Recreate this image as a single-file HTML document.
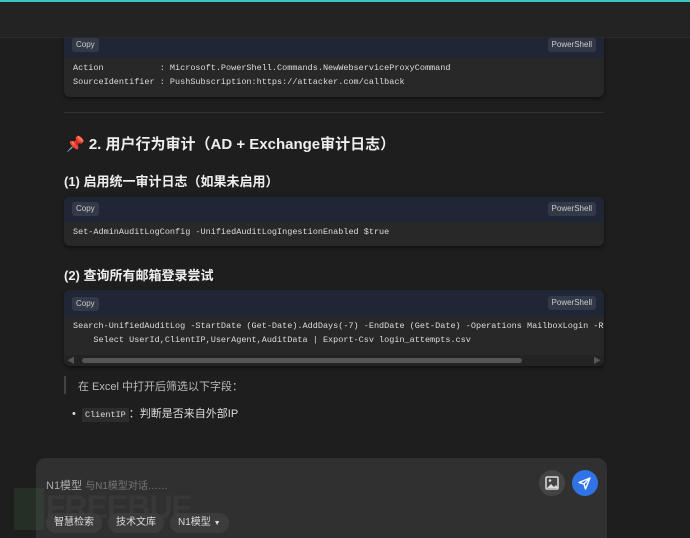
<!DOCTYPE html><html><head><meta charset="utf-8"><style>
html,body{margin:0;width:690px;height:538px;overflow:hidden}
body{background:#1e1e1e;position:relative;font-family:"Liberation Sans","Noto Sans CJK SC",sans-serif;color:#e6e6e6}
.top{position:absolute;left:0;top:0;width:690px;height:38px;background:#232323;border-top:2px solid #3fc2c4;box-sizing:border-box;z-index:5;border-bottom:1px solid #2a2a2a}
.cb{position:absolute;left:64px;width:540px;background:#282828;border-radius:6px;overflow:hidden;box-shadow:0 2px 4px rgba(0,0,0,.5)}
.hd{height:25px;background:#1f2736;position:relative}
.btn{position:absolute;top:5px;height:14px;line-height:14px;font-size:8px;background:#323a48;color:#ccc;border-radius:3px;padding:0 4px}
.code{font-family:"Liberation Mono",monospace;font-size:8.5px;color:#ddd;padding:6px 9px;line-height:14px;white-space:pre}
h2{position:absolute;left:66px;margin:0;font-size:15px;font-weight:bold;color:#eee}
h3{position:absolute;left:64px;margin:0;font-size:13px;font-weight:bold;color:#eee}
</style></head><body>
<div class="top"></div>
<div class="cb" style="top:33px;height:64px"><div class="hd"><span class="btn" style="left:8px">Copy</span><span class="btn" style="right:8px">PowerShell</span></div><div class="code" style="padding-top:3px">Action           : Microsoft.PowerShell.Commands.NewWebserviceProxyCommand
SourceIdentifier : PushSubscription:https://attacker.com/callback</div></div>
<div style="position:absolute;left:64px;top:112px;width:540px;height:1px;background:#333"></div>
<h2 style="top:133px">📌 2. 用户行为审计（AD + Exchange审计日志）</h2>
<h3 style="top:171px">(1) 启用统一审计日志（如果未启用）</h3>
<div class="cb" style="top:197px;height:49px"><div class="hd"><span class="btn" style="left:8px">Copy</span><span class="btn" style="right:8px">PowerShell</span></div><div class="code" style="padding-top:3px">Set-AdminAuditLogConfig -UnifiedAuditLogIngestionEnabled $true</div></div>
<h3 style="top:265px">(2) 查询所有邮箱登录尝试</h3>
<div class="cb" style="top:290px;height:76px"><div class="hd" style="height:27px"><span class="btn" style="left:8px;top:7px">Copy</span><span class="btn" style="right:8px;top:6px">PowerShell</span></div><div class="code" style="padding-top:2px">Search-UnifiedAuditLog -StartDate (Get-Date).AddDays(-7) -EndDate (Get-Date) -Operations MailboxLogin -ResultSize
    Select UserId,ClientIP,UserAgent,AuditData | Export-Csv login_attempts.csv</div>
<div style="position:absolute;left:0;bottom:0;width:540px;height:11px;background:#232323"><div style="position:absolute;left:18px;top:3px;width:440px;height:5px;border-radius:3px;background:#555"></div><span style="position:absolute;left:3px;top:0;font-size:8px;color:#555">◀</span><span style="position:absolute;right:3px;top:0;font-size:8px;color:#555">▶</span></div></div>
<div style="position:absolute;left:64px;top:376px;width:2px;height:18px;background:#444"></div>
<div style="position:absolute;left:78px;top:378px;font-size:11px;color:#bbb">在 Excel 中打开后筛选以下字段：</div>
<div style="position:absolute;left:72px;top:405px;font-size:11px;color:#ddd">•&nbsp;&nbsp;<span style="font-family:'Liberation Mono',monospace;font-size:8.5px;background:#2c2c2c;padding:2px 3px">ClientIP</span>：判断是否来自外部IP</div>
<div style="position:absolute;left:36px;top:458px;width:571px;height:90px;background:#303030;border-radius:10px"></div>
<div style="position:absolute;left:14px;top:488px;width:30px;height:42px;background:rgba(60,110,70,.22)"></div>
<div style="position:absolute;left:46px;top:489px;font-size:32px;font-weight:bold;color:rgba(90,90,90,.2);letter-spacing:-1px">FREEBUF</div>
<div style="position:absolute;left:46px;top:477px;font-size:11px;color:#aaa">N1模型 <span style="color:#777;font-size:10px">与N1模型对话……</span></div>
<div style="position:absolute;left:539px;top:470px;width:26px;height:26px;border-radius:50%;background:#444"><svg width="26" height="26" viewBox="0 0 26 26"><rect x="7" y="7" width="12" height="12" rx="1" fill="none" stroke="#ddd" stroke-width="1.5"/><path d="M8 18l4-4 3 3 2-2 2 3z" fill="#ddd"/><circle cx="11" cy="10.5" r="1.3" fill="#ddd"/></svg></div>
<div style="position:absolute;left:572px;top:470px;width:26px;height:26px;border-radius:50%;background:#2f73e6"><svg width="26" height="26" viewBox="0 0 26 26"><path d="M18 8L7 12.5l5 1.5 1.5 5z M12 14l6-6" fill="none" stroke="#fff" stroke-width="1.4" stroke-linejoin="round"/></svg></div>
<div style="position:absolute;left:46px;top:513px;height:20px;line-height:20px;padding:0 8px;border-radius:10px;background:#3c3c3c;font-size:10px;color:#ddd">智慧检索</div>
<div style="position:absolute;left:108px;top:513px;height:20px;line-height:20px;padding:0 8px;border-radius:10px;background:#3c3c3c;font-size:10px;color:#ddd">技术文库</div>
<div style="position:absolute;left:170px;top:513px;height:20px;line-height:20px;padding:0 8px;border-radius:10px;background:#3c3c3c;font-size:10px;color:#ddd">N1模型 <span style="font-size:7px">▼</span></div>
</body></html>
